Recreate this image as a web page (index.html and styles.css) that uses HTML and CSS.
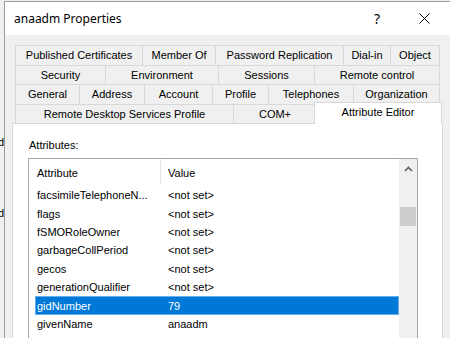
FILE: index.html
```html
<!DOCTYPE html>
<html>
<head>
    <title>anaadm Properties</title>
    <link rel="stylesheet" href="styles.css">
</head>
<body>
    <div class="desk">
        <div class="peek">
            <span class="peek-a">d</span>
            <span class="peek-b">d</span>
        </div>

        <div class="window">
            <div class="titlebar">
                <span class="title">anaadm Properties</span>
                <span class="caption-btn help">?</span>
                <span class="caption-btn close">
                    <svg width="11" height="11" viewBox="0 0 11 11">
                        <path d="M0.5 0.5 L10.5 10.5 M10.5 0.5 L0.5 10.5" stroke="#000" stroke-width="1" fill="none"/>
                    </svg>
                </span>
            </div>

            <div class="dialog">
                <div class="tabs">
                    <div class="tab-row row-1">
                        <div class="tab">Published Certificates</div>
                        <div class="tab">Member Of</div>
                        <div class="tab">Password Replication</div>
                        <div class="tab">Dial-in</div>
                        <div class="tab last">Object</div>
                    </div>
                    <div class="tab-row row-2">
                        <div class="tab">Security</div>
                        <div class="tab">Environment</div>
                        <div class="tab">Sessions</div>
                        <div class="tab last">Remote control</div>
                    </div>
                    <div class="tab-row row-3">
                        <div class="tab">General</div>
                        <div class="tab">Address</div>
                        <div class="tab">Account</div>
                        <div class="tab">Profile</div>
                        <div class="tab">Telephones</div>
                        <div class="tab last">Organization</div>
                    </div>
                    <div class="tab-row row-4">
                        <div class="tab">Remote Desktop Services Profile</div>
                        <div class="tab">COM+</div>
                        <div class="tab last selected">Attribute Editor</div>
                    </div>
                </div>

                <div class="panel">
                    <div class="label">Attributes:</div>
                    <div class="listbox">
                        <div class="list">
                            <div class="list-head">
                                <div class="head-cell">Attribute</div>
                                <div class="head-divider"></div>
                                <div class="head-cell value-head">Value</div>
                            </div>
                            <div class="row"><span>facsimileTelephoneN...</span><span>&lt;not set&gt;</span></div>
                            <div class="row"><span>flags</span><span>&lt;not set&gt;</span></div>
                            <div class="row"><span>fSMORoleOwner</span><span>&lt;not set&gt;</span></div>
                            <div class="row"><span>garbageCollPeriod</span><span>&lt;not set&gt;</span></div>
                            <div class="row"><span>gecos</span><span>&lt;not set&gt;</span></div>
                            <div class="row"><span>generationQualifier</span><span>&lt;not set&gt;</span></div>
                            <div class="row selected"><span>gidNumber</span><span>79</span></div>
                            <div class="row"><span>givenName</span><span>anaadm</span></div>
                        </div>
                        <div class="scrollbar">
                            <div class="scroll-btn">
                                <svg width="9" height="6" viewBox="0 0 9 6">
                                    <path d="M1 5 L4.5 1.5 L8 5" stroke="#606060" stroke-width="1.6" fill="none"/>
                                </svg>
                            </div>
                            <div class="thumb"></div>
                        </div>
                    </div>
                </div>
            </div>
        </div>
    </div>
</body>
</html>
```

FILE: styles.css
```css
* {
    margin: 0;
    padding: 0;
    box-sizing: border-box;
}

body {
    background: #f0f0f0;
    font-family: 'Liberation Sans', Arial, sans-serif;
    font-size: 11px;
    color: #000;
}

.desk {
    display: flex;
    width: 450px;
    height: 338px;
    overflow: hidden;
}

/* bit of the window behind, at the left edge */
.peek {
    flex: none;
    width: 4px;
    overflow: hidden;
    direction: rtl;
    display: flex;
    flex-direction: column;
    line-height: 13px;
    white-space: nowrap;
}

.peek-a {
    margin-top: 136px;
}

.peek-b {
    margin-top: 58px;
}

.window {
    flex: none;
    width: 460px;
    margin-top: 1px;
    border-top: 1px solid #9c9c9c;
    border-left: 1px solid #9c9c9c;
    background: #f0f0f0;
}

.titlebar {
    display: flex;
    align-items: center;
    height: 33px;
    background: #fff;
    padding-left: 9px;
    padding-right: 17px;
}

.title {
    flex: 1;
    font-family: 'Noto Sans', sans-serif;
    font-size: 12px;
}

.caption-btn {
    width: 46px;
    height: 33px;
    display: flex;
    align-items: center;
    justify-content: center;
}

.help {
    font-family: 'Noto Sans', sans-serif;
    font-size: 14px;
    padding-right: 2px;
}

.dialog {
    padding: 10px 0 0 7px;
}

.tabs {
    width: 431px;
    padding: 0 3px;
}

.tab-row {
    display: grid;
    height: 19.5px;
}

.row-1 { grid-template-columns: 127px 73px 128px 47px 1fr; }
.row-2 { grid-template-columns: 90px 113px 96px 1fr; }
.row-3 { grid-template-columns: 64px 65px 68px 56px 85px 1fr; }
.row-4 { grid-template-columns: 218px 83px 1fr; }

.tab {
    display: flex;
    align-items: center;
    justify-content: center;
    white-space: nowrap;
    background: #f0f0f0;
    border-top: 1px solid #d9d9d9;
    border-left: 1px solid #d9d9d9;
}

.tab.last {
    border-right: 1px solid #d9d9d9;
}

.tab.selected {
    position: relative;
    z-index: 1;
    margin: -2px -2px -1px -2px;
    padding-bottom: 3px;
    background: #fff;
    border-right: 1px solid #d9d9d9;
}

.panel {
    width: 431px;
    height: 240px;
    background: #fff;
    border: 1px solid #d9d9d9;
    padding: 15px 0 0 15px;
}

.label {
    line-height: 13px;
    padding-left: 1px;
}

.listbox {
    display: flex;
    width: 390px;
    height: 200px;
    margin-top: 6px;
    border: 1px solid #a6a6a6;
    border-bottom: none;
}

.list {
    flex: 1;
}

.list-head {
    display: flex;
    height: 27px;
    padding-left: 6px;
    align-items: center;
}

.head-cell {
    padding-left: 2px;
}

.head-cell:first-child {
    width: 125px;
}

.head-divider {
    width: 1px;
    align-self: stretch;
    margin-bottom: 1px;
    background: #e5e5e5;
}

.value-head {
    padding-left: 7px;
}

.row {
    display: grid;
    grid-template-columns: 131px 1fr;
    align-items: center;
    height: 18.4px;
    margin-left: 6px;
    white-space: nowrap;
}

.row span {
    padding-left: 2px;
}

.row.selected {
    background: #0078d7;
    color: #fff;
    box-shadow: inset 0 0 0 1px #66aef0;
}

.scrollbar {
    flex: none;
    width: 18px;
    background: #f0f0f0;
    padding: 0 1px;
}

.scroll-btn {
    height: 17px;
    display: flex;
    align-items: center;
    justify-content: center;
    padding-top: 2px;
}

.thumb {
    height: 19px;
    margin-top: 31px;
    background: #cdcdcd;
}
```
